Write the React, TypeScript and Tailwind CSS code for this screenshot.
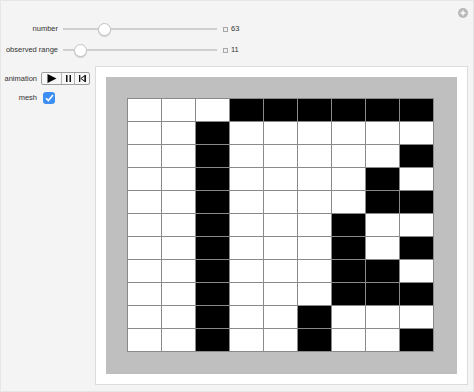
import React from "react";

const rows = Array.from({ length: 11 }, (_, i) =>
  (63 + i).toString(2).padStart(9, "0").split("").map((b) => b === "1")
);

const SliderRow = ({ label, value, pos }: any) => (
  <div className="flex items-center h-[14px]">
    <div className="w-[57px] text-right text-[7.5px] text-[#333] leading-none">{label}</div>
    <div className="ml-[5px] w-[154px] flex items-center">
      <div className="h-[2px] bg-[#cfcfcf]" style={{ width: pos }} />
      <div className="w-[13px] h-[13px] shrink-0 rounded-full bg-white border border-[#c4c4c4] shadow-[0_1px_1px_rgba(0,0,0,0.15)]" />
      <div className="h-[2px] bg-[#cfcfcf] flex-1" />
    </div>
    <div className="ml-[6px] w-[5px] h-[5px] border border-[#a8a8a8] bg-[#f0f0f0]" />
    <div className="ml-[3px] text-[7.5px] text-[#333] leading-none">{value}</div>
  </div>
);

export default function App() {
  return (
    <div
      className="relative w-[474px] h-[392px] bg-[#f4f4f4] border border-[#e6e6e6] pt-[21px]"
      style={{ fontFamily: '"Liberation Sans", Arial, sans-serif' }}
    >
      <div className="absolute right-[5px] top-[7px] w-[10px] h-[10px] rounded-full bg-[#b9b9b9] flex items-center justify-center">
        <svg width="6" height="6" viewBox="0 0 6 6">
          <path d="M3 0.5V5.5M0.5 3H5.5" stroke="#fff" strokeWidth="1.4" />
        </svg>
      </div>

      <SliderRow label="number" value="63" pos={35} />
      <div className="h-[7px]" />
      <SliderRow label="observed range" value="11" pos={11} />

      <div className="flex mt-[9px]">
        <div className="w-[94px] flex flex-col">
          <div className="flex items-center h-[13px] mt-[6px]">
            <div className="w-[36px] text-right text-[7.5px] text-[#333] leading-none">animation</div>
            <div className="ml-[4px] flex h-[13px] border border-[#9e9e9e] rounded-[2px] bg-[#f7f7f7] overflow-hidden">
              <div className="w-[20px] flex items-center justify-center border-r border-[#b5b5b5]">
                <svg width="10" height="9" viewBox="0 0 10 9">
                  <path d="M0.5 0L9.5 4.5L0.5 9Z" fill="#000" />
                </svg>
              </div>
              <div className="w-[13px] flex items-center justify-center border-r border-[#b5b5b5]">
                <svg width="5" height="7" viewBox="0 0 5 7">
                  <rect x="0" y="0" width="1.5" height="7" fill="#111" />
                  <rect x="3.5" y="0" width="1.5" height="7" fill="#111" />
                </svg>
              </div>
              <div className="w-[14px] flex items-center justify-center">
                <svg width="7" height="7" viewBox="0 0 7 7">
                  <rect x="0" y="0" width="1.3" height="7" fill="#111" />
                  <path d="M6 0.6L1.8 3.5L6 6.4Z" fill="none" stroke="#111" strokeWidth="1" />
                  <rect x="5.7" y="0" width="1.3" height="7" fill="#111" />
                </svg>
              </div>
            </div>
          </div>
          <div className="flex items-center h-[12px] mt-[7px]">
            <div className="w-[36px] text-right text-[7.5px] text-[#333] leading-none">mesh</div>
            <div className="ml-[6px] w-[12px] h-[12px] rounded-[3px] bg-[#3d8ef2] flex items-center justify-center">
              <svg width="9" height="8" viewBox="0 0 9 8">
                <path d="M1 4.2L3.4 6.6L8 1" fill="none" stroke="#fff" strokeWidth="1.6" />
              </svg>
            </div>
          </div>
        </div>

        <div className="w-[373px] h-[319px] bg-white border border-[#dcdcdc] p-[10px]">
          <div className="w-[351px] h-[297px] bg-[#bfbfbf] pl-[21px] pt-[21px]">
            <div className="w-[307px] border-l border-t border-[#8a8a8a] flex flex-col">
              {rows.map((r, i) => (
                <div key={i} className="flex">
                  {r.map((b, j) => (
                    <div
                      key={j}
                      className={`w-[34px] h-[23px] border-r border-b border-[#8a8a8a] ${b ? "bg-black" : "bg-white"}`}
                    />
                  ))}
                </div>
              ))}
            </div>
          </div>
        </div>
      </div>
    </div>
  );
}
